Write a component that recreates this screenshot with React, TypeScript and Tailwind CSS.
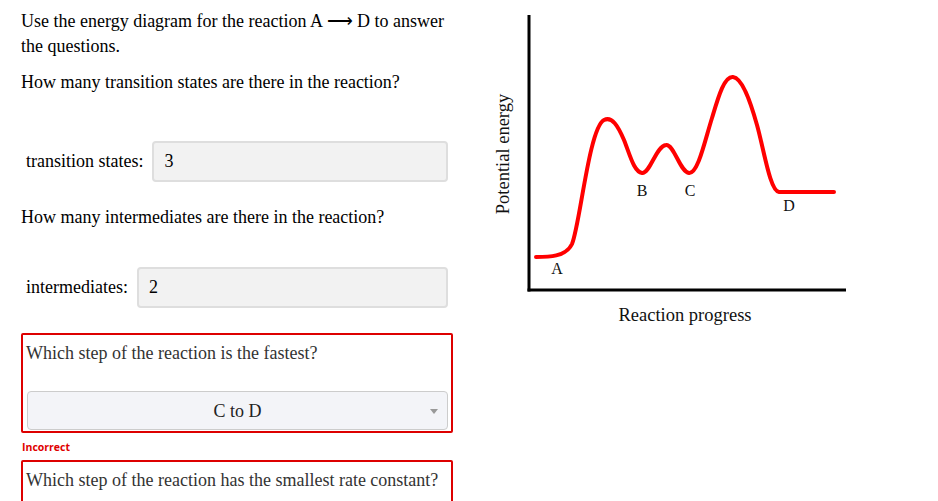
import React from "react";

const serif = { fontFamily: '"Liberation Serif", "Times New Roman", serif' };

const AnswerInput = ({ label, value }: { label: string; value: string }) => (
  <div className="flex items-center pl-[5px] pr-[5px]">
    <span className="mr-[9px] text-[18px] text-black">{label}</span>
    <div className="flex h-[41px] flex-1 items-center rounded-[4px] border-2 border-[#dedede] bg-[#f2f2f2] px-[10px] text-[18px] text-black">
      {value}
    </div>
  </div>
);

const EnergyDiagram = () => (
  <svg width="458" height="340" viewBox="480 0 458 340" className="block">
    <line x1="529" y1="15" x2="529" y2="291.5" stroke="#000" strokeWidth="3" />
    <line x1="527.5" y1="290" x2="846" y2="290" stroke="#000" strokeWidth="3" />
    <path
      d="M 536 257 C 548 257, 566 257, 572 244 C 580 225, 589 128, 604 120 C 612 116, 618 126, 624 140 C 630 155, 634 172, 642 173 C 650 174, 656 146, 666 145 C 674 144, 680 172, 689 173 C 698 174, 705 140, 712 118 C 718 98, 724 76, 733 77 C 742 78, 750 100, 757 125 C 764 150, 770 191, 779 192 L 834 192"
      fill="none"
      stroke="#ff0000"
      strokeWidth="4"
      strokeLinecap="round"
      strokeLinejoin="round"
    />
    <g fontFamily='"Liberation Serif", "Times New Roman", serif' fill="#111" textAnchor="middle">
      <text x="557" y="274" fontSize="16">A</text>
      <text x="642" y="196" fontSize="16">B</text>
      <text x="690" y="196" fontSize="16">C</text>
      <text x="789" y="211" fontSize="16">D</text>
      <text x="685" y="321" fontSize="18.5">Reaction progress</text>
      <text x="0" y="0" fontSize="18.5" transform="translate(509 154) rotate(-90)">
        Potential energy
      </text>
    </g>
  </svg>
);

export default function App() {
  return (
    <div className="flex h-[501px] w-[938px] overflow-hidden bg-white" style={serif}>
      <div className="w-[475px] shrink-0 pl-[21px] pr-[22px] pt-[9px]">
        <p className="text-[18px] leading-[25px] text-black">
          Use the energy diagram for the reaction A ⟶ D to answer the questions.
        </p>
        <p className="mt-[11px] text-[18px] leading-[25px] text-black">
          How many transition states are there in the reaction?
        </p>
        <div className="mt-[46px]">
          <AnswerInput label="transition states:" value="3" />
        </div>
        <p className="mt-[23px] text-[18px] leading-[25px] text-black">
          How many intermediates are there in the reaction?
        </p>
        <div className="mt-[37px]">
          <AnswerInput label="intermediates:" value="2" />
        </div>
        <div className="mt-[25px] rounded-[2px] border-2 border-[#dd0000] pb-[1px] pl-[3px] pr-[3px] pt-[6px]">
          <p className="text-[18px] leading-[25px] text-[#333]">Which step of the reaction is the fastest?</p>
          <div className="relative mt-[25px] ml-[1px] flex h-[39px] items-center justify-center rounded-[4px] border border-[#cccccc] bg-[#f3f4f8] pt-[1px] text-[18px] text-[#222]">
            C to D
            <span className="absolute right-[9px] top-[17px] h-0 w-0 border-x-[4px] border-t-[5px] border-x-transparent border-t-[#999]" />
          </div>
        </div>
        <div
          className="mt-[6px] pl-[1px] text-[10.5px] font-bold leading-[16px] text-[#e00000]"
          style={{ fontFamily: '"Open Sans", "Liberation Sans", sans-serif' }}
        >
          Incorrect
        </div>
        <div className="mt-[5px] h-[60px] rounded-[2px] border-2 border-[#dd0000] pl-[3px] pr-[3px] pt-[6px]">
          <p className="text-[18px] leading-[25px] text-[#333]">
            Which step of the reaction has the smallest rate constant?
          </p>
        </div>
      </div>
      <div className="ml-[5px] shrink-0">
        <EnergyDiagram />
      </div>
    </div>
  );
}
